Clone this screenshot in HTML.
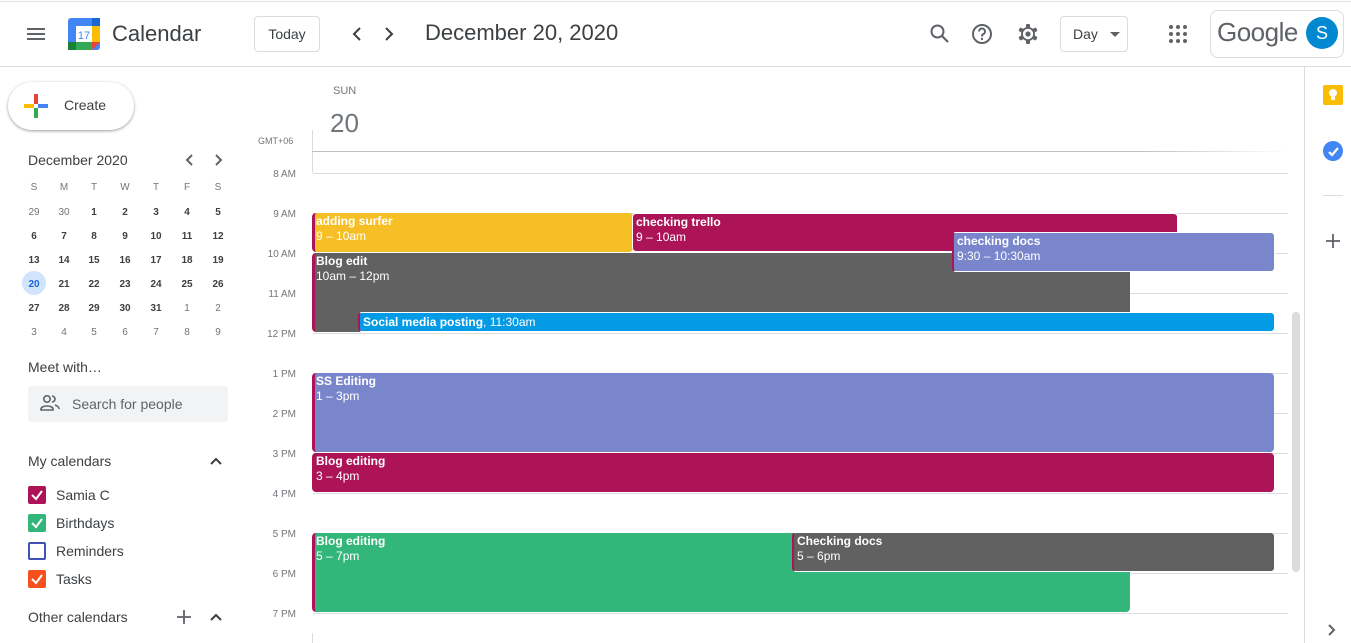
<!DOCTYPE html>
<html><head><meta charset="utf-8"><style>
*{box-sizing:border-box;margin:0;padding:0}
body{width:1351px;height:643px;overflow:hidden;background:#fff;font-family:"Liberation Sans",Arial,sans-serif;color:#3c4043;position:relative}
.a{position:absolute}
.ev{position:absolute;color:#fff;font-size:12px;line-height:15px;padding:1px 2px 1px 1px;border-radius:4px;border-left:3px solid #ad1457;overflow:hidden}
.ev b{font-weight:bold}
.hl{position:absolute;left:305px;width:983px;height:1px;background:#dadce0}
.tl{position:absolute;left:250px;width:46px;text-align:right;font-size:10px;color:#70757a}
.mc{position:absolute;width:24px;text-align:center;font-size:10px;color:#3c4043;font-weight:bold}
.cb{position:absolute;left:28px;width:18px;height:18px;border-radius:2px}
.cl{position:absolute;left:56px;font-size:14px;color:#3c4043}
</style></head><body>
<div class="a" style="left:0;top:1px;width:1351px;height:1px;background:#e0e0e0"></div>
<div class="a" style="left:0;top:66px;width:1351px;height:1px;background:#dadce0"></div>
<div class="a" style="left:27px;top:28px;width:18px;height:2px;background:#5f6368"></div>
<div class="a" style="left:27px;top:33px;width:18px;height:2px;background:#5f6368"></div>
<div class="a" style="left:27px;top:38px;width:18px;height:2px;background:#5f6368"></div>
<svg class="a" style="left:68px;top:18px" width="32" height="32" viewBox="0 0 32 32">
<rect x="0" y="0" width="32" height="32" rx="3" fill="#4285f4"/>
<rect x="24" y="0" width="8" height="8" fill="#1967d2"/>
<rect x="24" y="8" width="8" height="16" fill="#fbbc04"/>
<rect x="0" y="24" width="8" height="8" fill="#188038"/>
<rect x="8" y="24" width="16" height="8" fill="#34a853"/>
<polygon points="24,24 32,24 24,32" fill="#ea4335"/>
<rect x="8" y="8" width="16" height="16" fill="#fff"/>
<text x="16" y="21" font-size="11" text-anchor="middle" fill="#4285f4" font-family="Liberation Sans">17</text>
</svg>
<div class="a" style="left:112px;top:21px;font-size:22px;color:#3c4043">Calendar</div>
<div class="a" style="left:254px;top:16px;width:66px;height:36px;border:1px solid #dadce0;border-radius:4px;font-size:14px;text-align:center;line-height:34px">Today</div>
<svg class="a" style="left:347px;top:25px" width="60" height="18"><path d="M13 3 L7 9 L13 15" stroke="#3c4043" stroke-width="2" fill="none"/><path d="M39 3 L45 9 L39 15" stroke="#3c4043" stroke-width="2" fill="none"/></svg>
<div class="a" style="left:425px;top:20px;font-size:22px;color:#3c4043">December 20, 2020</div>
<svg class="a" style="left:928px;top:22px" width="24" height="24"><circle cx="9.5" cy="9.5" r="6" stroke="#5f6368" stroke-width="2" fill="none"/><path d="M14 14 L20 20" stroke="#5f6368" stroke-width="2.2"/></svg>
<svg class="a" style="left:970px;top:22px" width="24" height="24"><circle cx="12" cy="12" r="9" stroke="#5f6368" stroke-width="2" fill="none"/><path d="M9 9.5 a3 3 0 1 1 4 2.8 c-1 .5 -1 1.2 -1 2.2" stroke="#5f6368" stroke-width="2" fill="none"/><circle cx="12" cy="17" r="1.2" fill="#5f6368"/></svg>
<svg class="a" style="left:1016px;top:22px" width="24" height="24" viewBox="0 0 24 24"><g fill="#5f6368"><rect x="10" y="2" width="4" height="20" rx="1"/><rect x="10" y="2" width="4" height="20" rx="1" transform="rotate(60 12 12)"/><rect x="10" y="2" width="4" height="20" rx="1" transform="rotate(120 12 12)"/></g><circle cx="12" cy="12" r="7" fill="#5f6368"/><circle cx="12" cy="12" r="5.2" fill="#fff"/><circle cx="12" cy="12" r="2.6" fill="#5f6368"/></svg>
<div class="a" style="left:1060px;top:16px;width:68px;height:36px;border:1px solid #dadce0;border-radius:4px;font-size:14px;line-height:34px;padding-left:12px">Day</div>
<div class="a" style="left:1110px;top:32px;width:0;height:0;border-left:5px solid transparent;border-right:5px solid transparent;border-top:5px solid #5f6368"></div>
<svg class="a" style="left:1168px;top:24px" width="20" height="20" fill="#5f6368"><circle cx="3" cy="3" r="2"/><circle cx="10" cy="3" r="2"/><circle cx="17" cy="3" r="2"/><circle cx="3" cy="10" r="2"/><circle cx="10" cy="10" r="2"/><circle cx="17" cy="10" r="2"/><circle cx="3" cy="17" r="2"/><circle cx="10" cy="17" r="2"/><circle cx="17" cy="17" r="2"/></svg>
<div class="a" style="left:1210px;top:10px;width:134px;height:48px;border:1px solid #dadce0;border-radius:8px"></div>
<div class="a" style="left:1217px;top:17px;font-size:26px;color:#5f6368;letter-spacing:-0.5px">Google</div>
<div class="a" style="left:1306px;top:17px;width:32px;height:32px;border-radius:50%;background:#0288d1;color:#fff;font-size:18px;text-align:center;line-height:32px">S</div>
<div class="a" style="left:8px;top:82px;width:126px;height:48px;border-radius:24px;background:#fff;box-shadow:0 1px 3px rgba(60,64,67,.35),0 1px 2px rgba(60,64,67,.2)"></div>
<svg class="a" style="left:24px;top:94px" width="24" height="24"><rect x="10" y="0" width="4" height="10" fill="#ea4335"/><rect x="14" y="10" width="10" height="4" fill="#4285f4"/><rect x="10" y="14" width="4" height="10" fill="#34a853"/><rect x="0" y="10" width="10" height="4" fill="#fbbc04"/></svg>
<div class="a" style="left:64px;top:97px;font-size:14px;color:#3c4043">Create</div>
<div class="a" style="left:28px;top:152px;font-size:14px;color:#3c4043">December 2020</div>
<svg class="a" style="left:180px;top:152px" width="50" height="16"><path d="M12 3 L7 8 L12 13" stroke="#5f6368" stroke-width="2" fill="none"/><path d="M36 3 L41 8 L36 13" stroke="#5f6368" stroke-width="2" fill="none"/></svg>
<div class="a" style="left:22px;top:271px;width:24px;height:24px;border-radius:50%;background:#d2e3fc"></div>
<div id="mc"></div>
<script>
(function(){var xs=[34,64,94,125,156,187,218],h="";
var d=["S","M","T","W","T","F","S"];
for(var i=0;i<7;i++)h+='<div class="mc" style="left:'+(xs[i]-12)+'px;top:182px;font-weight:normal;color:#70757a">'+d[i]+'</div>';
var rows=[[29,30,1,2,3,4,5],[6,7,8,9,10,11,12],[13,14,15,16,17,18,19],[20,21,22,23,24,25,26],[27,28,29,30,31,1,2],[3,4,5,6,7,8,9]];
for(var r=0;r<6;r++)for(var c=0;c<7;c++){var other=(r==0&&c<2)||(r>=4&&(r==5||c>=5));
var st=other?'font-weight:normal;color:#70757a':'';if(r==3&&c==0)st='color:#1967d2';
h+='<div class="mc" style="left:'+(xs[c]-12)+'px;top:'+(207+r*24)+'px;'+st+'">'+rows[r][c]+'</div>';}
document.getElementById('mc').innerHTML=h;})();
</script>
<div class="a" style="left:28px;top:359px;font-size:14px;color:#3c4043">Meet with…</div>
<div class="a" style="left:28px;top:386px;width:200px;height:36px;background:#f1f3f4;border-radius:4px"></div>
<svg class="a" style="left:40px;top:394px" width="22" height="18"><circle cx="7" cy="5" r="3.2" stroke="#5f6368" stroke-width="1.6" fill="none"/><path d="M1 15 c0-4 12-4 12 0 v1 h-12z" stroke="#5f6368" stroke-width="1.6" fill="none"/><path d="M12 2 a3 3 0 0 1 0 6 M15 11 c3 1 4 2 4 4" stroke="#5f6368" stroke-width="1.6" fill="none"/></svg>
<div class="a" style="left:72px;top:396px;font-size:14px;color:#5f6368">Search for people</div>
<div class="a" style="left:28px;top:453px;font-size:14px;color:#3c4043">My calendars</div>
<svg class="a" style="left:208px;top:455px" width="16" height="12"><path d="M3 9 L8 4 L13 9" stroke="#3c4043" stroke-width="2" fill="none"/></svg>
<div class="cb" style="top:486px;background:#ad1457"></div>
<div class="cb" style="top:514px;background:#33b679"></div>
<div class="cb" style="top:542px;border:2px solid #3f51b5"></div>
<div class="cb" style="top:570px;background:#f4511e"></div>
<svg class="a" style="left:28px;top:486px" width="18" height="110"><g stroke="#fff" stroke-width="2" fill="none"><path d="M4 9 L8 13 L14 5"/><path d="M4 37 L8 41 L14 33"/><path d="M4 93 L8 97 L14 89"/></g></svg>
<div class="cl" style="top:487px">Samia C</div>
<div class="cl" style="top:515px">Birthdays</div>
<div class="cl" style="top:543px">Reminders</div>
<div class="cl" style="top:571px">Tasks</div>
<div class="a" style="left:28px;top:609px;font-size:14px;color:#3c4043">Other calendars</div>
<svg class="a" style="left:175px;top:609px" width="50" height="16"><path d="M9 1 V15 M2 8 H16" stroke="#5f6368" stroke-width="1.8"/><path d="M36 11 L41 6 L46 11" stroke="#3c4043" stroke-width="2" fill="none"/></svg>
<div class="a" style="left:333px;top:85px;font-size:11px;color:#70757a">SUN</div>
<div class="a" style="left:330px;top:108px;font-size:26px;color:#70757a">20</div>
<div class="a" style="left:258px;top:136px;font-size:9px;color:#70757a">GMT+06</div>
<div class="a" style="left:312px;top:130px;width:1px;height:513px;background:#dadce0"></div>
<div class="a" style="left:312px;top:151px;width:976px;height:1px;background:linear-gradient(90deg,#c0c0c0 85%,#fff)"></div>
<div id="grid"></div>
<script>
(function(){var L=["8 AM","9 AM","10 AM","11 AM","12 PM","1 PM","2 PM","3 PM","4 PM","5 PM","6 PM","7 PM"],h="";
for(var i=0;i<12;i++){var y=173+i*40;h+='<div class="hl" style="top:'+y+'px"></div><div class="tl" style="top:'+(y-4)+'px">'+L[i]+'</div>';}
document.getElementById('grid').innerHTML=h;})();
</script>
<div class="a" style="left:305px;top:173px;width:8px;height:460px;background:#fff"></div>
<div class="ev" style="left:312px;top:213px;width:321px;height:39px;background:#f6bf26"><b>adding surfer</b><br>9 – 10am</div>
<div class="ev" style="left:632px;top:213px;width:546px;height:39px;background:#ad1457;border:1px solid #fff;padding-left:3px"><b>checking trello</b><br>9 – 10am</div>
<div class="ev" style="left:312px;top:253px;width:818px;height:79px;background:#616161"><b>Blog edit</b><br>10am – 12pm</div>
<div class="ev" style="left:952px;top:232px;width:323px;height:40px;background:#7986cb;border:1px solid #fff;border-left:2px solid #ad1457;padding-left:3px"><b>checking docs</b><br>9:30 – 10:30am</div>
<div class="ev" style="left:358px;top:312px;width:917px;height:20px;background:#039be5;border:1px solid #fff;border-left:2px solid #ad1457;line-height:16px;padding:1px 3px 0"><b>Social media posting</b>, 11:30am</div>
<div class="ev" style="left:312px;top:373px;width:962px;height:79px;background:#7986cb"><b>SS Editing</b><br>1 – 3pm</div>
<div class="ev" style="left:312px;top:453px;width:962px;height:39px;background:#ad1457"><b>Blog editing</b><br>3 – 4pm</div>
<div class="ev" style="left:312px;top:533px;width:818px;height:79px;background:#33b679"><b>Blog editing</b><br>5 – 7pm</div>
<div class="ev" style="left:792px;top:532px;width:483px;height:40px;background:#616161;border:1px solid #fff;border-left:2px solid #ad1457;padding-left:3px"><b>Checking docs</b><br>5 – 6pm</div>
<div class="a" style="left:1292px;top:312px;width:8px;height:260px;background:#dadce0;border-radius:4px"></div>
<div class="a" style="left:1304px;top:67px;width:1px;height:576px;background:#dadce0"></div>
<div class="a" style="left:1323px;top:85px;width:20px;height:20px;background:#fbbc04;border-radius:2px"></div>
<div class="a" style="left:1329px;top:89px;width:8px;height:8px;background:#fff;border-radius:50%"></div>
<div class="a" style="left:1331px;top:97px;width:4px;height:3px;background:#fff"></div>
<div class="a" style="left:1323px;top:141px;width:20px;height:20px;background:#4285f4;border-radius:50%"></div>
<svg class="a" style="left:1323px;top:141px" width="20" height="20"><path d="M6 11 L9 14 L15 7" stroke="#fff" stroke-width="2.2" fill="none"/></svg>
<div class="a" style="left:1323px;top:195px;width:20px;height:1px;background:#dadce0"></div>
<svg class="a" style="left:1325px;top:233px" width="16" height="16"><path d="M8 1 V15 M1 8 H15" stroke="#5f6368" stroke-width="1.8"/></svg>
<svg class="a" style="left:1326px;top:623px" width="12" height="14"><path d="M3 2 L8 7 L3 12" stroke="#5f6368" stroke-width="2" fill="none"/></svg>
</body></html>
